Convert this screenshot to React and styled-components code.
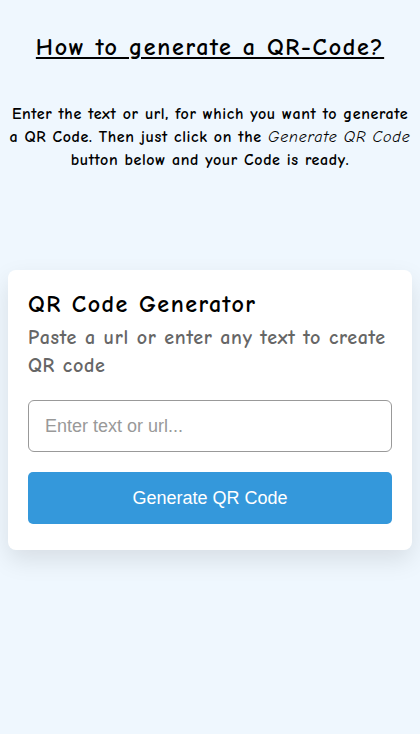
import React, { useState } from "react";
import styled, { createGlobalStyle } from "styled-components";

const GlobalStyle = createGlobalStyle`
  html, body {
    margin: 0;
    background: #eff7fe;
  }
  body {
    font-family: "Comic Sans MS", "Comic Neue", "Noto Sans", sans-serif;
  }
`;

const App = () => {
  const [text, setText] = useState("");

  return (
    <>
      <GlobalStyle />
      <Page>
        <Intro>
          <Heading>How to generate a QR-Code?</Heading>
          <Help>
            Enter the text or url, for which you want to generate a QR Code.
            Then just click on the <em>Generate QR Code</em> button below and
            your Code is ready.
          </Help>
        </Intro>

        <Card>
          <CardTitle>QR Code Generator</CardTitle>
          <CardSubtitle>
            Paste a url or enter any text to create QR code
          </CardSubtitle>
          <TextInput
            type="text"
            placeholder="Enter text or url..."
            value={text}
            onChange={(e) => setText(e.target.value)}
          />
          <GenerateButton>Generate QR Code</GenerateButton>
        </Card>
      </Page>
    </>
  );
};

export default App;

/* ---------------- STYLES ---------------- */

const Page = styled.div`
  min-height: 734px;
  padding: 0 8px;
  box-sizing: border-box;
`;

const Intro = styled.div`
  text-align: center;
  padding-top: 29px;
  height: 270px;
  box-sizing: border-box;
`;

const Heading = styled.h1`
  margin: 0;
  font-size: 24px;
  font-weight: 700;
  line-height: 36px;
  letter-spacing: 1.7px;
  text-decoration: underline;
  color: #000;
`;

const Help = styled.p`
  margin: 38px 0 0;
  font-size: 16px;
  line-height: 23px;
  letter-spacing: 0.6px;
  color: #000;
  font-weight: 600;

  em {
    font-weight: 400;
    letter-spacing: 0.8px;
  }
`;

const Card = styled.div`
  background: #fff;
  border-radius: 8px;
  padding: 20px 20px 26px;
  box-shadow: 0 10px 25px rgba(0, 0, 0, 0.1);
  display: flex;
  flex-direction: column;
`;

const CardTitle = styled.h2`
  margin: 0;
  font-size: 24px;
  font-weight: 700;
  line-height: 28px;
  letter-spacing: 1.5px;
  color: #000;
`;

const CardSubtitle = styled.p`
  margin: 6px 0 20px;
  font-size: 20px;
  line-height: 28px;
  letter-spacing: 0.7px;
  color: #666;
  font-weight: 600;
`;

const TextInput = styled.input`
  height: 52px;
  box-sizing: border-box;
  border: 1px solid #999;
  border-radius: 6px;
  padding: 0 16px;
  font-family: "Liberation Sans", Arial, sans-serif;
  font-size: 18px;
  color: #333;
  outline: none;

  &::placeholder {
    color: #999;
  }
`;

const GenerateButton = styled.button`
  margin-top: 20px;
  height: 52px;
  border: none;
  border-radius: 5px;
  background: #3498db;
  color: #fff;
  font-family: "Liberation Sans", Arial, sans-serif;
  font-size: 18px;
  cursor: pointer;
`;
